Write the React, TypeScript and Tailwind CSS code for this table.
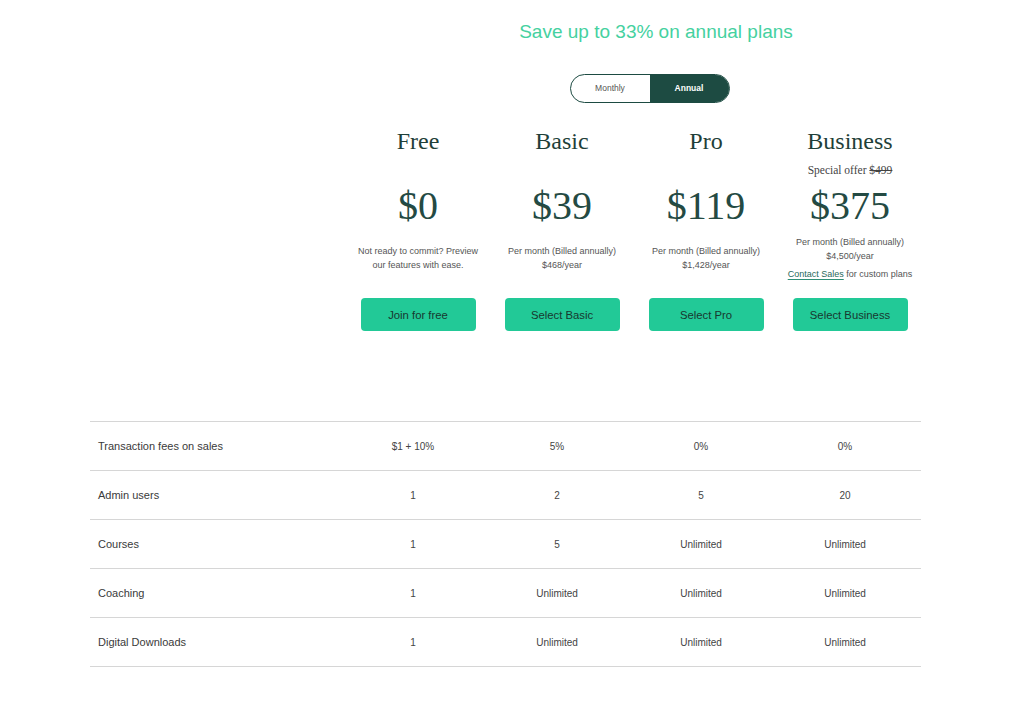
import React from "react";

const sans = { fontFamily: '"Liberation Sans", Arial, sans-serif' };
const serif = { fontFamily: '"Liberation Serif", "Times New Roman", serif' };

type Plan = {
  name: string;
  price: string;
  special?: boolean;
  desc: React.ReactNode;
  cta: string;
};

const plans: Plan[] = [
  {
    name: "Free",
    price: "$0",
    desc: (
      <>
        <div>Not ready to commit? Preview</div>
        <div>our features with ease.</div>
      </>
    ),
    cta: "Join for free",
  },
  {
    name: "Basic",
    price: "$39",
    desc: (
      <>
        <div>Per month (Billed annually)</div>
        <div>$468/year</div>
      </>
    ),
    cta: "Select Basic",
  },
  {
    name: "Pro",
    price: "$119",
    desc: (
      <>
        <div>Per month (Billed annually)</div>
        <div>$1,428/year</div>
      </>
    ),
    cta: "Select Pro",
  },
  {
    name: "Business",
    price: "$375",
    special: true,
    desc: (
      <>
        <div>Per month (Billed annually)</div>
        <div>$4,500/year</div>
        <div className="mt-[4px]">
          <span className="text-[#2a6a5b] underline decoration-[#2f8f76] underline-offset-2">Contact Sales</span> for custom plans
        </div>
      </>
    ),
    cta: "Select Business",
  },
];

const rows: [string, string, string, string, string][] = [
  ["Transaction fees on sales", "$1 + 10%", "5%", "0%", "0%"],
  ["Admin users", "1", "2", "5", "20"],
  ["Courses", "1", "5", "Unlimited", "Unlimited"],
  ["Coaching", "1", "Unlimited", "Unlimited", "Unlimited"],
  ["Digital Downloads", "1", "Unlimited", "Unlimited", "Unlimited"],
];

export default function App() {
  return (
    <div className="w-[1024px] min-h-[706px] bg-white" style={sans}>
      <div className="pt-[21px] pl-[288px] flex justify-center">
        <div className="text-[19px] leading-[22px] text-[#45d1a0]">Save up to 33% on annual plans</div>
      </div>

      <div className="mt-[31px] pl-[275px] flex justify-center">
        <div className="flex w-[160px] h-[29px] rounded-full border border-[#1d4b42] overflow-hidden">
          <div className="w-[79px] flex items-center justify-center text-[8.5px] text-[#555]">Monthly</div>
          <div className="flex-1 flex items-center justify-center bg-[#1d4b42] text-[8.5px] font-bold text-white">Annual</div>
        </div>
      </div>

      <div className="mt-[23px] ml-[346px] grid grid-cols-[144px_144px_144px_144px]">
        {plans.map((p) => (
          <div key={p.name} className="flex flex-col items-center text-center">
            <div className="h-[30px] text-[24px] leading-[30px] text-[#1f3f39]" style={serif}>
              {p.name}
            </div>
            <div className="h-[26px] pt-[7px]">
              {p.special && (
                <div className="text-[11.5px] leading-[14px] text-[#444]" style={serif}>
                  Special offer <span className="line-through">$499</span>
                </div>
              )}
            </div>
            <div className="h-[48px] text-[40px] leading-[48px] text-[#244a43]" style={serif}>
              {p.price}
            </div>
            <div className="h-[56px] flex flex-col justify-center text-[9px] leading-[14px] text-[#555]">
              {p.desc}
            </div>
            <button className="mt-[12px] w-[115px] h-[33px] pt-[1px] rounded-[4px] bg-[#22c997] text-[11.3px] text-[#18382f]">
              {p.cta}
            </button>
          </div>
        ))}
      </div>

      <div className="mt-[90px] ml-[90px] w-[831px] border-t border-[#d6d6d6]">
        {rows.map((r) => (
          <div
            key={r[0]}
            className="grid grid-cols-[251px_144px_144px_144px_144px] h-[49px] items-center border-b border-[#d6d6d6]"
          >
            <div className="pl-[8px] text-[11px] text-[#3a3a3a]">{r[0]}</div>
            {r.slice(1).map((v, i) => (
              <div key={i} className="text-center text-[10px] text-[#444]">
                {v}
              </div>
            ))}
          </div>
        ))}
      </div>
    </div>
  );
}
